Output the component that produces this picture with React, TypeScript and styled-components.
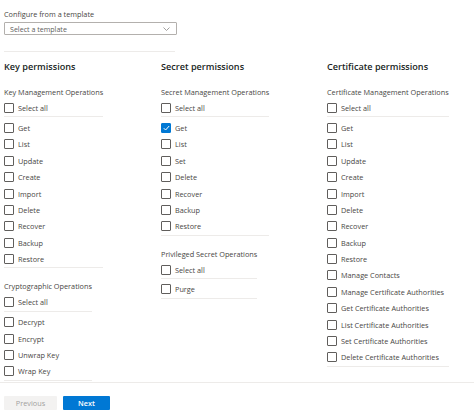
import React from "react";
import styled, { createGlobalStyle } from "styled-components";

const Global = createGlobalStyle`
  html, body { margin: 0; padding: 0; background: #ffffff; }
  body {
    font-family: "Open Sans", "Noto Sans", "Liberation Sans", sans-serif;
    color: #323130;
    -webkit-font-smoothing: antialiased;
  }
  * { box-sizing: border-box; }
`;

const Page = styled.div`
  width: 474px;
  height: 414px;
  padding-top: 8px;
  overflow: hidden;
`;

const Content = styled.div`
  padding: 0 4px;
`;

const TemplateBlock = styled.div`
  width: 173px;
  display: flex;
  flex-direction: column;
`;

const FieldLabel = styled.div`
  font-size: 7.3px;
  line-height: 12px;
  color: #484644;
  margin-bottom: 2px;
`;

const Dropdown = styled.div`
  height: 13px;
  border: 1px solid #b3b0ad;
  border-radius: 1px;
  display: flex;
  align-items: center;
  justify-content: space-between;
  padding: 0 6px 0 5px;
  font-size: 7.1px;
  color: #605e5c;
`;

const Divider = styled.div`
  height: 1px;
  background: #edebe9;
  margin-top: 16px;
  width: 171px;
`;

const Grid = styled.div`
  display: grid;
  grid-template-columns: 157px 166px 1fr;
  margin-top: 8px;
`;

const Column = styled.div`
  display: flex;
  flex-direction: column;
  align-items: flex-start;
`;

const Heading = styled.div`
  font-size: 9.1px;
  line-height: 14px;
  font-weight: 600;
  color: #201f1e;
  margin-bottom: 12px;
`;

const Group = styled.div`
  width: max-content;
  display: flex;
  flex-direction: column;
  border-bottom: 1px solid #edebe9;
  & + & {
    margin-top: 12px;
  }
`;

const GroupLabel = styled.div`
  font-size: 7.3px;
  line-height: 12px;
  color: #484644;
  margin-bottom: 2px;
`;

const SelectAllRow = styled.div`
  border-bottom: 1px solid #edebe9;
`;

const Items = styled.div`
  padding-top: 2.4px;
  display: flex;
  flex-direction: column;
`;

const Row = styled.label`
  height: 16.4px;
  display: flex;
  align-items: center;
  gap: 4px;
  font-size: 7.3px;
  color: #484644;
`;

const Box = styled.span<{ $checked?: boolean }>`
  width: 10px;
  height: 10px;
  flex: none;
  border-radius: 1px;
  border: 1px solid ${(p) => (p.$checked ? "#0078d4" : "#605e5c")};
  background: ${(p) => (p.$checked ? "#0078d4" : "#ffffff")};
  display: flex;
  align-items: center;
  justify-content: center;
`;

const Footer = styled.div`
  margin-top: 1px;
  border-top: 1px solid #edebe9;
  padding: 13px 4px 0 4px;
  display: flex;
  gap: 6px;
`;

const Button = styled.button<{ $primary?: boolean }>`
  height: 14px;
  width: ${(p) => (p.$primary ? "47px" : "53px")};
  border: none;
  border-radius: 1px;
  padding: 0;
  font-family: inherit;
  font-size: 7.3px;
  font-weight: ${(p) => (p.$primary ? 600 : 400)};
  background: ${(p) => (p.$primary ? "#0078d4" : "#f3f2f1")};
  color: ${(p) => (p.$primary ? "#ffffff" : "#a19f9d")};
  display: flex;
  align-items: center;
  justify-content: center;
`;

const Chevron = () => (
  <svg width="7" height="4" viewBox="0 0 7 4">
    <polyline points="0.5,0.5 3.5,3.5 6.5,0.5" fill="none" stroke="#8a8886" strokeWidth="0.8" />
  </svg>
);

const Check = () => (
  <svg width="7" height="6" viewBox="0 0 7 6">
    <polyline points="0.8,3.2 2.6,5 6.2,1" fill="none" stroke="#ffffff" strokeWidth="1" />
  </svg>
);

const Item = ({ label, checked }: { label: string; checked?: boolean }) => (
  <Row>
    <Box $checked={checked}>{checked && <Check />}</Box>
    {label}
  </Row>
);

type GroupDef = { title: string; items: string[]; checked?: string[] };

const PermGroup = ({ g }: { g: GroupDef }) => (
  <Group>
    <GroupLabel>{g.title}</GroupLabel>
    <SelectAllRow>
      <Item label="Select all" />
    </SelectAllRow>
    <Items>
      {g.items.map((it) => (
        <Item key={it} label={it} checked={g.checked?.includes(it)} />
      ))}
    </Items>
  </Group>
);

const columns: { heading: string; groups: GroupDef[] }[] = [
  {
    heading: "Key permissions",
    groups: [
      {
        title: "Key Management Operations",
        items: ["Get", "List", "Update", "Create", "Import", "Delete", "Recover", "Backup", "Restore"],
      },
      {
        title: "Cryptographic Operations",
        items: ["Decrypt", "Encrypt", "Unwrap Key", "Wrap Key"],
      },
    ],
  },
  {
    heading: "Secret permissions",
    groups: [
      {
        title: "Secret Management Operations",
        items: ["Get", "List", "Set", "Delete", "Recover", "Backup", "Restore"],
        checked: ["Get"],
      },
      {
        title: "Privileged Secret Operations",
        items: ["Purge"],
      },
    ],
  },
  {
    heading: "Certificate permissions",
    groups: [
      {
        title: "Certificate Management Operations",
        items: [
          "Get",
          "List",
          "Update",
          "Create",
          "Import",
          "Delete",
          "Recover",
          "Backup",
          "Restore",
          "Manage Contacts",
          "Manage Certificate Authorities",
          "Get Certificate Authorities",
          "List Certificate Authorities",
          "Set Certificate Authorities",
          "Delete Certificate Authorities",
        ],
      },
    ],
  },
];

export default function App() {
  return (
    <>
      <Global />
      <Page>
        <Content>
          <TemplateBlock>
            <FieldLabel>Configure from a template</FieldLabel>
            <Dropdown>
              <span>Select a template</span>
              <Chevron />
            </Dropdown>
            <Divider />
          </TemplateBlock>
          <Grid>
            {columns.map((c) => (
              <Column key={c.heading}>
                <Heading>{c.heading}</Heading>
                {c.groups.map((g) => (
                  <PermGroup key={g.title} g={g} />
                ))}
              </Column>
            ))}
          </Grid>
        </Content>
        <Footer>
          <Button>Previous</Button>
          <Button $primary>Next</Button>
        </Footer>
      </Page>
    </>
  );
}
